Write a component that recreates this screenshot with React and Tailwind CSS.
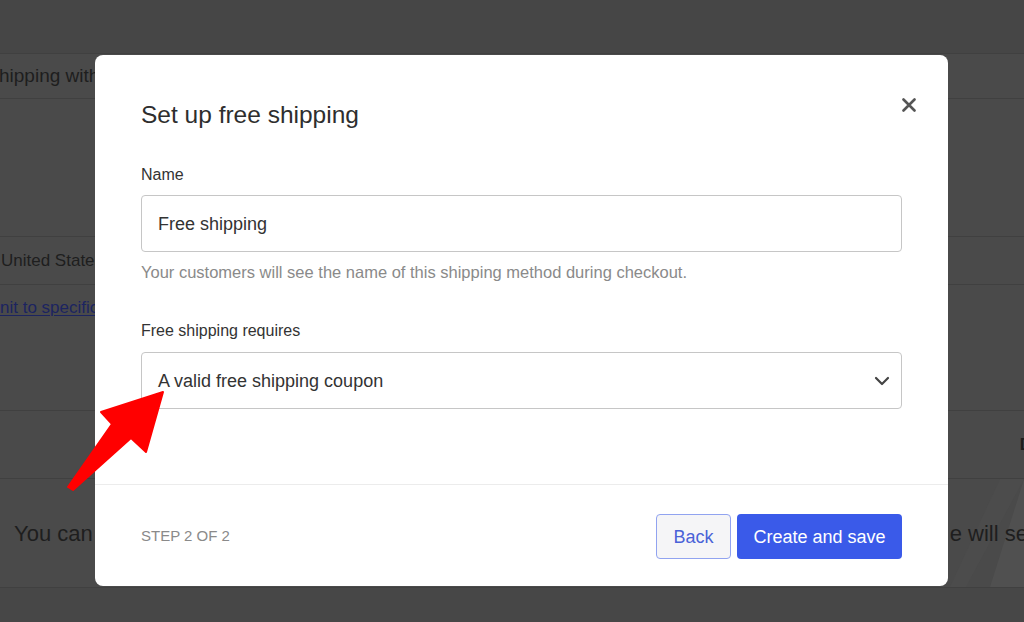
import React from "react";

function Background() {
  return (
    <div className="flex h-full flex-col bg-[#4a4a4a] text-[#1e1e1e]">
      <div className="h-[54px] shrink-0 border-b border-[#404040] bg-[#464646]" />
      <div className="flex h-[45px] shrink-0 items-center overflow-hidden whitespace-nowrap border-b border-[#404040] text-[19px]">
        <span className="-ml-[1px]">hipping with a minimum order amount</span>
      </div>
      <div className="h-[138px] shrink-0 border-b border-[#404040]" />
      <div className="flex h-[48px] shrink-0 items-center overflow-hidden whitespace-nowrap border-b border-[#404040] text-[17px]">
        <span className="ml-[1px]">United States</span>
      </div>
      <div className="h-[126px] shrink-0 overflow-hidden whitespace-nowrap border-b border-[#404040] pt-[10px] text-[17px]">
        <span className="text-[#1c2460] underline decoration-1 underline-offset-2">nit to specific states</span>
      </div>
      <div className="flex h-[68px] shrink-0 items-center justify-end overflow-hidden whitespace-nowrap border-b border-[#404040] text-[17px]">
        <span className="-mr-[8px] font-bold">D</span>
      </div>
      <div className="relative flex h-[109px] shrink-0 items-center justify-between overflow-hidden whitespace-nowrap border-b border-[#404040] text-[22px]">
        <svg className="absolute inset-0 h-full w-full" viewBox="0 0 1024 109" preserveAspectRatio="none">
          <polygon points="1024,0 1024,109 990,109" fill="#505050" />
          <polygon points="1000,0 1024,0 966,109 950,109" fill="#4c4c4c" />
        </svg>
        <span className="relative ml-[14px]">You can add more shipping methods</span>
        <span className="relative -mr-[4px]">e will se</span>
      </div>
      <div className="flex-1 bg-[#474747]" />
    </div>
  );
}

function Modal() {
  return (
    <div className="absolute left-[95px] top-[55px] flex h-[531px] w-[853px] flex-col rounded-[8px] bg-white">
      <div className="flex items-start justify-between pl-[46px] pr-[32px] pt-[44px]">
        <h2 className="text-[24.5px] leading-[32px] text-[#2e2e2e]">Set up free shipping</h2>
        <button className="-mt-[1px] flex h-[14px] w-[14px] items-center justify-center" aria-label="Close">
          <svg width="14" height="14" viewBox="0 0 14 14">
            <path d="M1.5 1.5 L12.5 12.5 M12.5 1.5 L1.5 12.5" stroke="#555" strokeWidth="2.6" strokeLinecap="round" />
          </svg>
        </button>
      </div>
      <div className="flex flex-1 flex-col px-[46px]">
        <label className="mt-[34px] text-[16px] leading-[20px] text-[#333]">Name</label>
        <div className="mt-[10px] flex h-[57px] items-center rounded-[4px] border border-[#c6c6c6] px-[16px] pt-[1px] text-[18px] text-[#333]">
          Free shipping
        </div>
        <p className="mt-[10px] text-[16.5px] leading-[20px] text-[#8a8a8a]">
          Your customers will see the name of this shipping method during checkout.
        </p>
        <label className="mt-[39px] text-[16px] leading-[20px] text-[#333]">Free shipping requires</label>
        <div className="mt-[11px] flex h-[57px] items-center justify-between rounded-[4px] border border-[#c6c6c6] pl-[16px] pr-[11px] pt-[2px] text-[18px] text-[#333]">
          <span>A valid free shipping coupon</span>
          <svg width="16" height="10" viewBox="0 0 16 10" className="-mt-[2px]">
            <path d="M2 2 L8 8 L14 2" stroke="#444" strokeWidth="2.2" fill="none" strokeLinecap="round" strokeLinejoin="round" />
          </svg>
        </div>
      </div>
      <div className="flex h-[102px] items-center justify-between border-t border-[#ececec] pb-[2px] pl-[46px] pr-[46px] pt-[4px]">
        <span className="text-[15px] text-[#8a8a8a]">STEP 2 OF 2</span>
        <div className="flex gap-[6px]">
          <button className="h-[45px] w-[75px] rounded-[4px] border border-[#91a3f0] bg-[#f5f5f7] pt-[2px] text-[18px] text-[#4a62d8]">
            Back
          </button>
          <button className="h-[45px] w-[165px] rounded-[4px] bg-[#3a5ae9] pt-[2px] text-[18px] text-white">
            Create and save
          </button>
        </div>
      </div>
    </div>
  );
}

function Arrow() {
  return (
    <svg className="pointer-events-none absolute inset-0" width="1024" height="622" viewBox="0 0 1024 622">
      <polygon
        points="163,392 146,452 131,438 73,490 68,487 112,424 101,412"
        fill="#ff0000"
        stroke="#ff0000"
        strokeWidth="2"
        strokeLinejoin="round"
      />
    </svg>
  );
}

export default function App() {
  return (
    <div className="relative h-[622px] w-[1024px] overflow-hidden" style={{ fontFamily: '"Liberation Sans", Arial, sans-serif' }}>
      <Background />
      <Modal />
      <Arrow />
    </div>
  );
}
